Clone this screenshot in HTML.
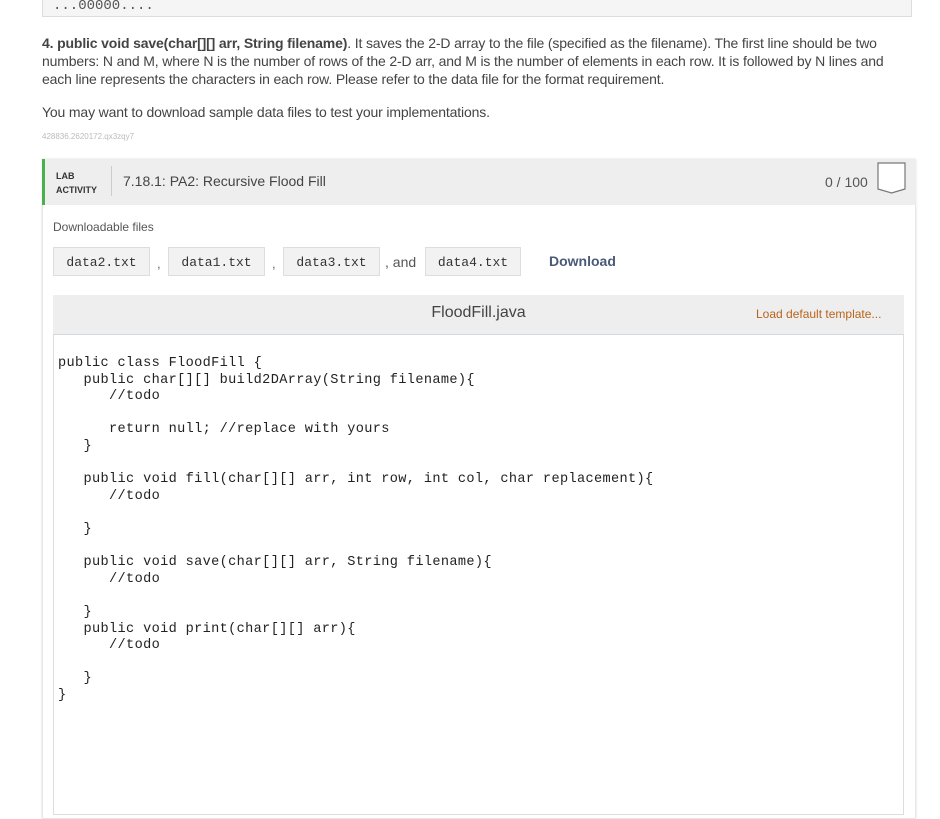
<!DOCTYPE html>
<html><head><meta charset="utf-8"><style>
body{margin:0;background:#fff;width:940px;height:809px;overflow:hidden;font-family:"Liberation Sans",sans-serif;color:#333;position:relative}
.abs{position:absolute}
.pre{left:42px;top:-2px;width:870px;height:19px;background:#f5f5f5;border:1px solid #ddd;font-family:"Liberation Mono",monospace;font-size:14px;color:#555;line-height:14px;padding-left:10px;box-sizing:border-box}
.p{left:42px;width:872px;font-size:14px;line-height:18px;color:#444;letter-spacing:-0.15px}
.code{font-family:"Liberation Mono","Courier New",monospace;font-size:13.6px;letter-spacing:0.35px;line-height:16.6px;white-space:pre;color:#222}
.file{top:247px;height:29px;background:#f2f2f2;border:1px solid #ddd;font-family:"Liberation Mono",monospace;font-size:13px;line-height:29px;text-align:center;color:#333;box-sizing:border-box}
</style></head><body>
<div class="abs pre">...00000....</div>
<div class="abs p" style="top:34px"><b style="font-weight:600">4. public void save(char[][] arr, String filename)</b>. It saves the 2-D array to the file (specified as the filename). The first line should be two numbers: N and M, where N is the number of rows of the 2-D arr, and M is the number of elements in each row. It is followed by N lines and each line represents the characters in each row. Please refer to the data file for the format requirement.</div>
<div class="abs p" style="top:103px">You may want to download sample data files to test your implementations.</div>
<div class="abs" style="left:42px;top:132px;font-size:8px;color:#bbb">428836.2620172.qx3zqy7</div>
<div class="abs" style="left:42px;top:159px;width:874px;height:660px;border:1px solid #e6e6e6;box-sizing:border-box;box-shadow:0 0 2px #ddd"></div>
<div class="abs" style="left:42px;top:159px;width:874px;height:46px;background:#eee;border-left:3px solid #4caf50;box-sizing:border-box"></div>
<div class="abs" style="left:56px;top:169px;font-size:9px;font-weight:bold;line-height:14px;color:#333">LAB<br>ACTIVITY</div>
<div class="abs" style="left:111px;top:166px;width:1px;height:30px;background:#ccc"></div>
<div class="abs" style="left:123px;top:173px;font-size:14px;color:#444">7.18.1: PA2: Recursive Flood Fill</div>
<div class="abs" style="left:825px;top:174px;font-size:14px;color:#555">0 / 100</div>
<svg class="abs" style="left:877px;top:162px" width="30" height="36"><path d="M1 1H28V27L14.5 31L1 27Z" fill="#fff" stroke="#777" stroke-width="1.2"/></svg>
<div class="abs" style="left:53px;top:220px;font-size:12px;color:#555">Downloadable files</div>
<div class="abs file" style="left:53px;width:97px">data2.txt</div>
<div class="abs" style="left:157px;top:256px;font-size:13px;color:#666">,</div>
<div class="abs file" style="left:168px;width:97px">data1.txt</div>
<div class="abs" style="left:272px;top:256px;font-size:13px;color:#666">,</div>
<div class="abs file" style="left:283px;width:97px">data3.txt</div>
<div class="abs" style="left:385px;top:254px;font-size:14px;color:#555">, and</div>
<div class="abs file" style="left:425px;width:96px">data4.txt</div>
<div class="abs" style="left:549px;top:253px;font-size:14px;font-weight:bold;color:#4a5a78">Download</div>
<div class="abs" style="left:53px;top:295px;width:851px;height:520px;border:1px solid #ddd;box-sizing:border-box;background:#fff"></div>
<div class="abs" style="left:53px;top:295px;width:851px;height:40px;background:#eee;border-bottom:1px solid #d0d8e0;box-sizing:border-box"></div>
<div class="abs" style="left:53px;width:851px;top:304px;text-align:center;font-size:16px;color:#444">FloodFill.java</div>
<div class="abs" style="left:756px;top:307px;font-size:12px;color:#b8651b">Load default template...</div>
<div class="abs code" style="left:58px;top:356px">public class FloodFill {
   public char[][] build2DArray(String filename){
      //todo

      return null; //replace with yours
   }

   public void fill(char[][] arr, int row, int col, char replacement){
      //todo

   }

   public void save(char[][] arr, String filename){
      //todo

   }
   public void print(char[][] arr){
      //todo

   }
}</div>
</body></html>
